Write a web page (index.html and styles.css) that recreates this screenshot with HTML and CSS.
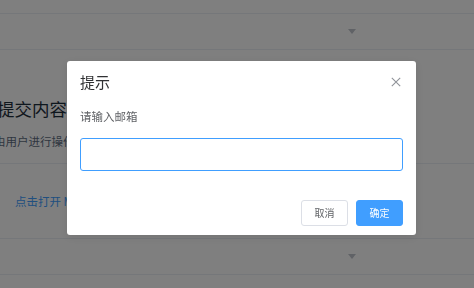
FILE: index.html
```html
<!DOCTYPE html>
<html lang="zh-CN">
<head>
    <meta charset="UTF-8">
    <meta name="viewport" content="width=device-width, initial-scale=1.0">
    <title>MessageBox</title>
    <link rel="stylesheet" href="styles.css">
</head>
<body>

<div class="page">
    <div class="demo-tail">
        <div class="demo-control"><span class="caret"></span></div>
    </div>

    <h3 class="section-title">提交内容</h3>
    <p class="section-desc">由用户进行操作</p>

    <div class="demo-block">
        <div class="demo-source">
            <a class="link" href="#">点击打开 Message Box</a>
        </div>
        <div class="demo-control"><span class="caret"></span></div>
    </div>
</div>

<div class="overlay">
    <div class="message-box">
        <div class="box-header">
            <span class="box-title">提示</span>
            <button class="box-close" aria-label="关闭">
                <svg width="10" height="10" viewBox="0 0 10 10">
                    <path d="M0.8 0.8 L9.2 9.2 M9.2 0.8 L0.8 9.2" stroke="#909399" stroke-width="1.1" fill="none"/>
                </svg>
            </button>
        </div>
        <div class="box-content">
            <p class="box-message">请输入邮箱</p>
            <input class="box-input" type="text">
        </div>
        <div class="box-btns">
            <button class="btn">取消</button>
            <button class="btn btn-primary">确定</button>
        </div>
    </div>
</div>

</body>
</html>
```

FILE: styles.css
```css
body {
    margin: 0;
    width: 474px;
    height: 288px;
    overflow: hidden;
    background: #fff;
    font-family: "Noto Sans CJK SC", "Noto Sans", sans-serif;
}

.page {
    width: 474px;
}

/* background documentation page */
.demo-tail {
    padding-top: 13px;
}
.demo-block {
    margin-top: 14px;
    border-top: 1px solid #ebeef5;
}
.demo-control {
    height: 35px;
    border-top: 1px solid #ebeef5;
    border-bottom: 1px solid #ebeef5;
    display: flex;
    align-items: center;
    padding-left: 348px;
}
.caret {
    width: 0;
    height: 0;
    border-left: 4px solid transparent;
    border-right: 4px solid transparent;
    border-top: 5px solid #c0c4cc;
}
.section-title {
    margin: 47px 0 0 -3px;
    font-size: 17.5px;
    font-weight: 400;
    line-height: 24px;
    color: #1f2f3d;
}
.section-desc {
    margin: 12px 0 0 -6px;
    font-size: 11.5px;
    line-height: 16px;
    color: #5e6d82;
}
.demo-source {
    height: 74px;
    display: flex;
    align-items: center;
    padding-left: 15px;
}
.link {
    font-size: 11.5px;
    color: #409eff;
    text-decoration: none;
}

/* modal */
.overlay {
    position: fixed;
    inset: 0;
    background: rgba(0, 0, 0, 0.5);
    display: flex;
    justify-content: center;
    align-items: flex-start;
    padding: 61px 0 0 9px;
    box-sizing: border-box;
}
.message-box {
    width: 349px;
    box-sizing: border-box;
    background: #fff;
    border-radius: 3px;
    box-shadow: 0 2px 10px rgba(0, 0, 0, 0.1);
    padding-bottom: 9px;
}
.box-header {
    display: flex;
    justify-content: space-between;
    align-items: center;
    padding: 12px 13px 8px 13px;
}
.box-title {
    font-size: 15px;
    line-height: 18px;
    color: #303133;
}
.box-close {
    border: none;
    background: none;
    padding: 0;
    width: 10px;
    height: 10px;
    display: flex;
    margin-right: 2px;
}
.box-content {
    padding: 7px 13px 0 13px;
}
.box-message {
    margin: 0;
    font-size: 11.5px;
    line-height: 20px;
    color: #606266;
}
.box-input {
    display: block;
    width: 100%;
    height: 33px;
    margin-top: 12px;
    box-sizing: border-box;
    border: 1px solid #409eff;
    border-radius: 3px;
    outline: none;
    padding: 0 12px;
}
.box-btns {
    display: flex;
    justify-content: flex-end;
    gap: 8px;
    padding: 29px 13px 0 13px;
}
.btn {
    font-family: "Noto Sans CJK SC", "Noto Sans", sans-serif;
    font-size: 10px;
    line-height: 10px;
    padding: 7px 12px;
    height: 26px;
    width: 47px;
    box-sizing: border-box;
    border: 1px solid #dcdfe6;
    border-radius: 3px;
    background: #fff;
    color: #606266;
}
.btn-primary {
    background: #409eff;
    border-color: #409eff;
    color: #fff;
}
```
